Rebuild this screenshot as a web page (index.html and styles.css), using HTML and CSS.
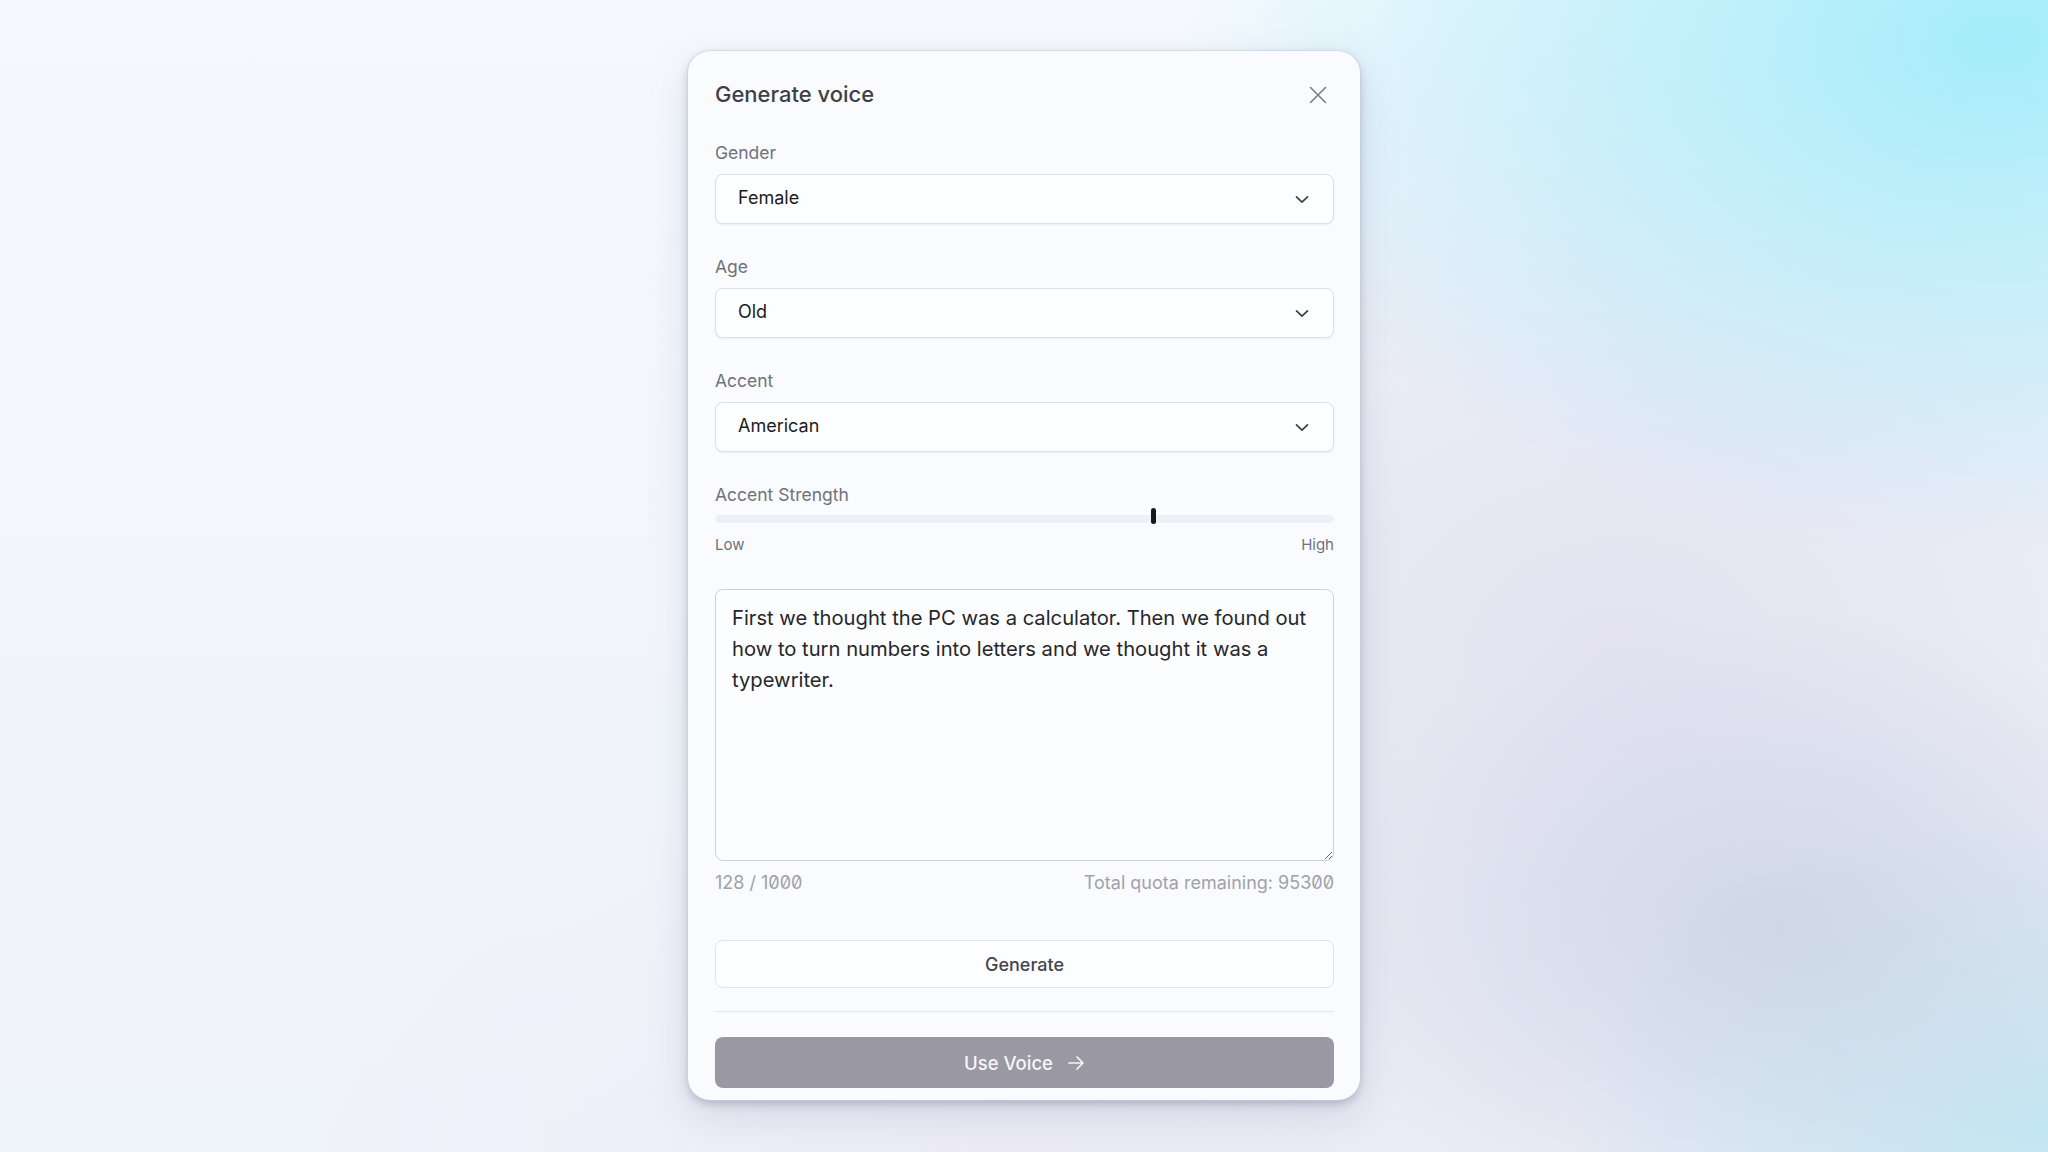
FILE: index.html
```html
<!DOCTYPE html>
<html lang="en">
<head>
<meta charset="utf-8">
<title>Generate voice</title>
<link rel="stylesheet" href="styles.css">
</head>
<body>
<div class="modal">
  <div class="header">
    <h1 class="title">Generate voice</h1>
    <button class="close" aria-label="Close">
      <svg width="18" height="18" viewBox="0 0 18 18"><path d="M1.5 1.5L16.5 16.5M16.5 1.5L1.5 16.5" stroke="#7c7c86" stroke-width="1.6" stroke-linecap="round" fill="none"/></svg>
    </button>
  </div>

  <div class="field">
    <div class="label">Gender</div>
    <div class="select"><span>Female</span><svg class="chev" width="14" height="9" viewBox="0 0 14 9"><path d="M1.5 1.8L7 7.2L12.5 1.8" stroke="#3f3f46" stroke-width="1.7" fill="none" stroke-linecap="round" stroke-linejoin="round"/></svg></div>
  </div>
  <div class="field">
    <div class="label">Age</div>
    <div class="select"><span>Old</span><svg class="chev" width="14" height="9" viewBox="0 0 14 9"><path d="M1.5 1.8L7 7.2L12.5 1.8" stroke="#3f3f46" stroke-width="1.7" fill="none" stroke-linecap="round" stroke-linejoin="round"/></svg></div>
  </div>
  <div class="field">
    <div class="label">Accent</div>
    <div class="select"><span>American</span><svg class="chev" width="14" height="9" viewBox="0 0 14 9"><path d="M1.5 1.8L7 7.2L12.5 1.8" stroke="#3f3f46" stroke-width="1.7" fill="none" stroke-linecap="round" stroke-linejoin="round"/></svg></div>
  </div>

  <div class="slider-block">
    <div class="label">Accent Strength</div>
    <div class="track"><div class="thumb" style="left: 70.7%"></div></div>
    <div class="range-labels"><span>Low</span><span>High</span></div>
  </div>

  <textarea class="text" spellcheck="false">First we thought the PC was a calculator. Then we found out how to turn numbers into letters and we thought it was a typewriter.</textarea>
  <div class="counts"><span>128 / 1000</span><span>Total quota remaining: 95300</span></div>

  <button class="generate">Generate</button>
  <div class="divider"></div>
  <button class="use">Use Voice <svg width="18" height="18" viewBox="0 0 18 18"><path d="M2 9H16M10 3L16 9L10 15" stroke="#f4f4f6" stroke-width="1.7" fill="none" stroke-linecap="round" stroke-linejoin="round"/></svg></button>
</div>
</body>
</html>
```

FILE: styles.css
```css
* { box-sizing: border-box; }
html, body { margin: 0; padding: 0; }
body {
  width: 2048px;
  height: 1152px;
  overflow: hidden;
  font-family: Inter, "Noto Sans", sans-serif;
  display: flex;
  justify-content: center;
  align-items: flex-start;
  padding-top: 51px;
  background:
    radial-gradient(ellipse 820px 520px at 2000px 40px, rgba(160,236,250,0.95), rgba(160,236,250,0) 100%),
    radial-gradient(ellipse 480px 320px at 1780px 930px, rgba(202,212,228,0.85), rgba(202,212,228,0) 100%),
    radial-gradient(ellipse 480px 320px at 2048px 1130px, rgba(190,232,244,0.95), rgba(190,232,244,0) 100%),
    radial-gradient(ellipse 900px 700px at 1620px 660px, rgba(228,226,241,1), rgba(228,226,241,0) 100%),
    radial-gradient(ellipse 700px 400px at 1000px 1152px, rgba(236,234,246,0.9), rgba(236,234,246,0) 100%),
    linear-gradient(180deg, #f5f9fd 0%, #eff3fa 100%);
}
.modal {
  width: 672px;
  background: #f9fbfe;
  border-radius: 22px;
  padding: 28px 26px 12px 27px;
  box-shadow:
    0 0 0 1px rgba(200,205,218,0.55),
    0 4px 8px rgba(90,92,112,0.3),
    0 14px 40px rgba(100,110,140,0.18);
}
.header {
  display: flex;
  justify-content: space-between;
  align-items: center;
  height: 30px;
  margin-bottom: 32px;
}
.title {
  margin: 0;
  font-size: 22px;
  line-height: 30px;
  font-weight: 500;
  color: #3f3f46;
}
.close {
  width: 32px;
  height: 32px;
  border: none;
  background: none;
  padding: 0;
  display: flex;
  align-items: center;
  justify-content: center;
  margin-top: 2px;
}
.field { margin-bottom: 31px; }
.label {
  font-size: 17.5px;
  line-height: 24px;
  color: #71717a;
  margin-bottom: 9px;
}
.select {
  height: 50px;
  border: 1px solid #dadfe8;
  border-radius: 8px;
  background: #fdfeff;
  box-shadow: 0 1px 2px rgba(30,40,70,0.07);
  display: flex;
  align-items: center;
  justify-content: space-between;
  padding: 0 24px 3px 22px;
  font-size: 18px;
  line-height: 24px;
  color: #1c1c20;
}
.chev { margin-top: 3px; }
.slider-block .label { margin-bottom: 8px; }
.track {
  position: relative;
  height: 8px;
  border-radius: 4px;
  background: #edf1f7;
}
.thumb {
  position: absolute;
  top: -7px;
  width: 5px;
  height: 16px;
  margin-left: -2px;
  border-radius: 3px;
  background: #18181b;
}
.range-labels {
  display: flex;
  justify-content: space-between;
  margin-top: 12px;
  font-size: 15px;
  line-height: 20px;
  color: #71717a;
}
.text {
  display: block;
  width: 100%;
  height: 272px;
  margin-top: 34px;
  padding: 12px 16px;
  border: 1.5px solid #cdd1da;
  border-radius: 8px;
  background: #fbfdff;
  font-family: Inter, "Noto Sans", sans-serif;
  font-size: 20.2px;
  line-height: 31px;
  color: #27272a;
  outline: none;
}
.counts {
  display: flex;
  justify-content: space-between;
  margin-top: 10px;
  font-size: 18px;
  line-height: 24px;
  color: #a1a1aa;
  font-feature-settings: "zero" 1;
}
.generate {
  display: block;
  width: 100%;
  height: 48px;
  margin-top: 45px;
  border: 1px solid #dde2ec;
  border-radius: 8px;
  background: #fdfeff;
  font-family: Inter, "Noto Sans", sans-serif;
  font-size: 18px;
  font-weight: 500;
  color: #45454d;
}
.divider {
  height: 1px;
  background: #e3e5ec;
  margin: 23px 0 25px;
}
.use {
  width: 100%;
  height: 51px;
  border: none;
  border-radius: 8px;
  background: #9a98a2;
  font-family: Inter, "Noto Sans", sans-serif;
  font-size: 18.5px;
  font-weight: 500;
  color: #f6f6f8;
  display: flex;
  align-items: center;
  justify-content: center;
  gap: 14px;
}
```
